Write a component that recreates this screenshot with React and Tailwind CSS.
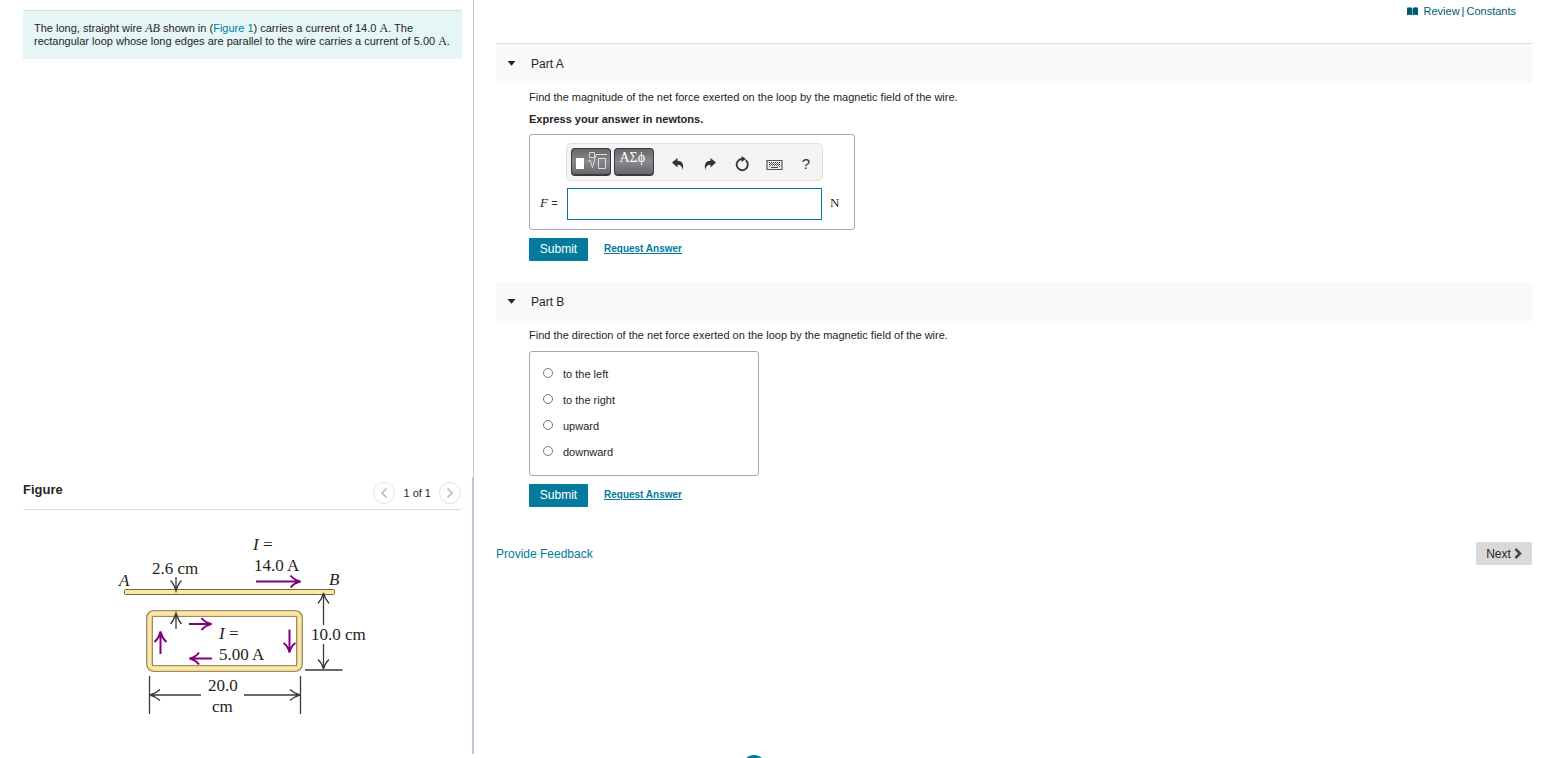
const ANSWERS = ["to the left", "to the right", "upward", "downward"];

function PartHeader({ title, bordered }) {
  return (
    <h2
      className={
        bordered
          ? "h-10 border-t border-[#dcdfe2] bg-[#f9f9f9]"
          : "h-[39px] bg-[#f9f9f9]"
      }
    >
      <button
        type="button"
        aria-expanded="true"
        className="flex h-full w-full items-center gap-[15px] pl-[11px] text-xs text-[#252525]"
      >
        <svg width="9" height="5" viewBox="0 0 9 5" aria-hidden="true">
          <path d="M0.500 0h8L4.500 4.800z" fill="#252525" />
        </svg>
        <span>{title}</span>
      </button>
    </h2>
  );
}

function SubmitRow() {
  return (
    <div className="mt-2 flex items-center gap-4">
      <button
        type="submit"
        className="h-[23px] w-[59px] rounded-[1px] bg-[#047a9c] pb-px text-xs text-white"
      >
        Submit
      </button>
      <a
        href="#request"
        className="pb-0.5 text-[10px] leading-3 font-bold text-[#047a9c] underline"
      >
        Request Answer
      </a>
    </div>
  );
}

function ToolButton({ label, children }) {
  return (
    <button
      type="button"
      aria-label={label}
      className="flex h-7 w-8 items-center justify-center text-[#333]"
    >
      {children}
    </button>
  );
}

function MathToolbar() {
  const dark =
    "h-7 rounded-[4px] border border-b-2 border-[#3a3a3d] bg-linear-to-b from-[#68686b] via-[#88888d] to-[#68686b] text-white";
  return (
    <div className="flex h-[38px] items-center rounded-[5px] border border-[#dfdfdf] bg-[#f4f4f4] pl-1">
      <button type="button" aria-label="Templates" className={`${dark} w-[41px] pl-[3px]`}>
        <svg className="block" width="33" height="20" viewBox="0 0 33 20" aria-hidden="true">
          <path d="M1 6h8v11H1z" fill="#fff" />
          <path d="M14.500 0.500h5v5h-5zM23.500 6.500h7v10h-7z" fill="none" stroke="#ddd" />
          <path d="M13 9l2-1 2.500 7.500L21 2.500h11" fill="none" stroke="#ddd" />
        </svg>
      </button>
      <button
        type="button"
        className={`${dark} ml-[3px] flex w-10 justify-center pt-px pr-1 font-['Liberation_Serif',serif] text-sm leading-4`}
      >
        ΑΣϕ
      </button>
      <div className="ml-2 flex pt-[3px]">
        <ToolButton label="Undo">
          <svg width="14" height="14" viewBox="0 0 14 14" aria-hidden="true">
            <path d="M1 5.500L6.500 1v2.800c4.500 0 6.500 3 5.300 9.200C11.200 9.500 9.500 7.700 6.500 7.700v2.800z" fill="currentColor" />
          </svg>
        </ToolButton>
        <ToolButton label="Redo">
          <svg width="14" height="14" viewBox="0 0 14 14" aria-hidden="true">
            <path d="M13 5.500L7.500 1v2.800C3 3.800 1 6.800 2.200 13 2.800 9.500 4.500 7.700 7.500 7.700v2.800z" fill="currentColor" />
          </svg>
        </ToolButton>
        <ToolButton label="Reset">
          <svg width="16" height="18" viewBox="0 0 16 18" aria-hidden="true">
            <path d="M11.800 5.300A5.600 5.600 0 1 1 8 4" fill="none" stroke="currentColor" strokeWidth="1.800" />
            <path d="M7.500 1l4.500 3L7.500 7z" fill="currentColor" />
          </svg>
        </ToolButton>
        <ToolButton label="Keyboard shortcuts">
          <svg width="17" height="14" viewBox="0 0 17 14" aria-hidden="true">
            <path d="M1 3.500h15v9H1z" fill="#eee" stroke="#555" strokeWidth="1.200" />
            <path d="M3 5.500h11M3 7.500h11" stroke="#333" strokeDasharray="1 1" />
            <path d="M4 6.500h10M4 8.500h9M3 9.500h1M13 9.500h1" stroke="#666" strokeDasharray="1 1" />
            <path d="M5 10.500h7" stroke="#444" />
          </svg>
        </ToolButton>
        <ToolButton label="Help">
          <span className="text-[15px]">?</span>
        </ToolButton>
      </div>
    </div>
  );
}

function WireFigure() {
  return (
    <svg
      className="mt-5 ml-[87px] block"
      width="270"
      height="190"
      viewBox="0 0 270 190"
      role="img"
      aria-label="Wire AB above a rectangular current loop"
    >
      <rect x="14.500" y="59.500" width="210" height="5" rx="1" fill="#fbe6a2" stroke="#6d6650" />
      <rect x="39.500" y="83.500" width="150" height="55" rx="4" fill="none" stroke="#6d6650" strokeWidth="6.500" />
      <rect x="39.500" y="83.500" width="150" height="55" rx="4" fill="none" stroke="#f5d987" strokeWidth="4.800" />
      <rect x="39.500" y="83.500" width="150" height="55" rx="4" fill="none" stroke="#fdeebb" strokeWidth="1.500" />
      <g fill="none" stroke="#3a3a3a" strokeWidth="1.300">
        <path d="M66 47v14M60.500 50.500Q64 54 66 61Q68 54 71.500 50.500" />
        <path d="M66 99V83M60.500 94Q64 90 66 83Q68 90 71.500 94" />
        <path d="M213.500 95V63M208 73.500Q212 69 213.500 63Q215 69 219 73.500" />
        <path d="M213.500 114v25M208 129.500Q212 133 213.500 139Q215 133 219 129.500" />
        <path d="M195 140h37.500M39.500 146v38M190.500 146v38" />
        <path d="M91 165H40M50 159.500Q46 163.500 40 165Q46 166.500 50 170.500" />
        <path d="M134 165h56M180 159.500Q184 163.500 190 165Q184 166.500 180 170.500" />
      </g>
      <g fill="none" stroke="#800080" strokeWidth="2">
        <path d="M146 51.500h43M180.500 45.500Q184 50 190.500 51.500Q184 53 180.500 57.500" />
        <path d="M79 94h21M91.500 88Q95 92.500 101.500 94Q95 95.500 91.500 100" />
        <path d="M102 128.500H81M89 122.500Q86 127 79.500 128.500Q86 130 89 134.500" />
        <path d="M50.500 124v-21M44.500 112Q49 108 50.500 101.500Q52 108 56.500 112" />
        <path d="M179.500 99.500v21M173.500 113Q178 116 179.500 122.500Q181 116 185.500 113" />
      </g>
      <g fill="#231f20" fontFamily="'Liberation Serif', serif" fontSize="17">
        <text x="9" y="56" fontStyle="italic">A</text>
        <text x="219" y="55" fontStyle="italic">B</text>
        <text x="42" y="44">2.6 cm</text>
        <text x="143" y="20"><tspan fontStyle="italic">I</tspan> =</text>
        <text x="144" y="41">14.0 A</text>
        <text x="109" y="109"><tspan fontStyle="italic">I</tspan> =</text>
        <text x="109" y="130">5.00 A</text>
        <text x="201" y="110">10.0 cm</text>
        <text x="98" y="161">20.0</text>
        <text x="102" y="182">cm</text>
      </g>
    </svg>
  );
}

function PagerButton({ label, d }) {
  return (
    <button
      type="button"
      aria-label={label}
      className="flex size-[22px] items-center justify-center rounded-full border border-[#e3e3e3]"
    >
      <svg width="8" height="12" viewBox="0 0 8 12" aria-hidden="true">
        <path d={d} fill="none" stroke="#b9b9b9" strokeWidth="1.600" />
      </svg>
    </button>
  );
}

export default function App() {
  return (
    <div className="flex min-h-screen overflow-hidden bg-white font-['Liberation_Sans',Arial,sans-serif] text-[11px] leading-[14px] text-[#252525]">
      <aside className="flex w-[474px] shrink-0 flex-col pb-1">
        <div className="flex-1 border-r border-[#c3c9d0] pt-2.5 pr-[11px] pl-[23px]">
          <p className="border-t border-[#d9dfe0] bg-[#e6f6f6] px-[11px] py-[11px] leading-[13px]">
            The long, straight wire{" "}
            <i className="font-['Liberation_Serif',serif] text-xs leading-3">AB</i> shown in (
            <a href="#figure" className="text-[#047a9c]">Figure 1</a>) carries a current of 14.0{" "}
            <span className="font-['Liberation_Serif',serif] text-xs leading-3">A</span>. The
            rectangular loop whose long edges are parallel to the wire carries a current of 5.00{" "}
            <span className="font-['Liberation_Serif',serif] text-xs leading-3">A</span>.
          </p>
        </div>
        <section id="figure" className="h-[277px] border-r-2 border-[#b9c9d9] pr-[11px] pl-[23px]">
          <div className="flex h-[33px] items-center justify-between border-b border-[#dcdcdc]">
            <h2 className="pb-1.5 text-[13px] font-bold">Figure</h2>
            <div className="flex items-center gap-2">
              <PagerButton label="Previous figure" d="M6.500 1.500L2 6l4.500 4.500" />
              <span>1 of 1</span>
              <PagerButton label="Next figure" d="M1.500 1.500L6 6l-4.500 4.500" />
            </div>
          </div>
          <WireFigure />
        </section>
      </aside>

      <main className="min-w-0 flex-1 pr-[11px] pl-[22px]">
        <nav className="flex h-[43px] items-start justify-end pt-1 pr-4 text-[#005a70]">
          <svg className="mt-[3px] mr-1.5" width="11" height="9" viewBox="0 0 11 9" aria-hidden="true">
            <path d="M0 0.800Q2.500 -0.300 5 0.800V8.300Q2.500 7.300 0 8.300zM6 0.800Q8.500 -0.300 11 0.800V8.300Q8.500 7.300 6 8.300z" fill="#005a70" />
            <path d="M5 1.500h1v6H5z" fill="#7fa9b4" />
          </svg>
          <a href="#review">Review</a>
          <span className="px-0.5">|</span>
          <a href="#constants">Constants</a>
        </nav>

        <form onSubmit={(e) => e.preventDefault()}>
          <PartHeader title="Part A" bordered />
          <div className="pt-[7px] pb-[21px] pl-[33px]">
            <p>Find the magnitude of the net force exerted on the loop by the magnetic field of the wire.</p>
            <p className="mt-2 font-bold">Express your answer in newtons.</p>
            <div className="mt-2 grid h-24 w-[326px] grid-cols-[36px_257px_1fr] content-start gap-y-[7px] rounded-[3px] border border-[#a9a9a9] pt-2">
              <div className="col-start-2">
                <MathToolbar />
              </div>
              <label
                htmlFor="force"
                className="col-start-1 self-center pb-0.5 pl-2.5 font-['Liberation_Serif',serif] text-[13px] whitespace-nowrap"
              >
                <i>F</i> <span className="font-['Liberation_Sans',sans-serif] text-[11px]">=</span>
              </label>
              <input id="force" type="text" className="mx-px h-8 border border-[#047a9c] px-2 text-sm outline-none" />
              <span className="self-center pb-0.5 pl-[7px] font-['Liberation_Serif',serif] text-[13px]">N</span>
            </div>
            <SubmitRow />
          </div>
        </form>

        <form onSubmit={(e) => e.preventDefault()}>
          <PartHeader title="Part B" />
          <div className="pt-[7px] pl-[33px]">
            <p>Find the direction of the net force exerted on the loop by the magnetic field of the wire.</p>
            <fieldset className="mt-[9px] flex h-[125px] w-[230px] flex-col rounded-[3px] border border-[#a9a9a9] pt-[9px] pl-[13px]">
              {ANSWERS.map((answer) => (
                <label key={answer} className="flex h-[26px] items-center gap-2.5">
                  <input
                    type="radio"
                    name="direction"
                    className="mb-0.5 size-2.5 appearance-none rounded-full border border-[#767676] checked:bg-[#047a9c]"
                  />
                  {answer}
                </label>
              ))}
            </fieldset>
            <SubmitRow />
          </div>
        </form>

        <div className="mt-[35px] flex items-center justify-between text-xs">
          <a href="#feedback" className="text-[#047a9c]">Provide Feedback</a>
          <button type="button" className="flex h-[23px] w-14 items-center justify-center gap-[3px] rounded-[2px] bg-[#d9d9d9] text-[#252525]">
            Next
            <svg width="8" height="11" viewBox="0 0 8 11" aria-hidden="true">
              <path d="M1.500 1L6 5.500 1.500 10" fill="none" stroke="#41484e" strokeWidth="2.500" />
            </svg>
          </button>
        </div>
      </main>
      <div className="fixed -bottom-[21px] left-[742px] size-6 rounded-full bg-[#047a9c]" aria-hidden="true" />
    </div>
  );
}
